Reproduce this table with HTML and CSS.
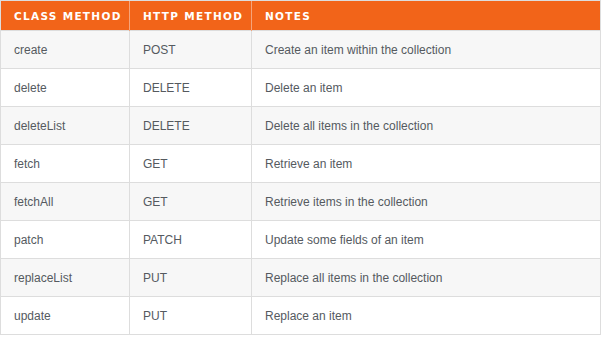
FILE: index.html
```html
<!DOCTYPE html>
<html lang="en">
<head>
    <meta charset="UTF-8">
    <title>Collection Methods</title>
    <link rel="stylesheet" href="styles.css">
</head>
<body>
    <table class="methods">
        <thead>
            <tr>
                <th class="col-class">Class Method</th>
                <th class="col-http">HTTP Method</th>
                <th>Notes</th>
            </tr>
        </thead>
        <tbody>
            <tr><td>create</td><td>POST</td><td>Create an item within the collection</td></tr>
            <tr><td>delete</td><td>DELETE</td><td>Delete an item</td></tr>
            <tr><td>deleteList</td><td>DELETE</td><td>Delete all items in the collection</td></tr>
            <tr><td>fetch</td><td>GET</td><td>Retrieve an item</td></tr>
            <tr><td>fetchAll</td><td>GET</td><td>Retrieve items in the collection</td></tr>
            <tr><td>patch</td><td>PATCH</td><td>Update some fields of an item</td></tr>
            <tr><td>replaceList</td><td>PUT</td><td>Replace all items in the collection</td></tr>
            <tr><td>update</td><td>PUT</td><td>Replace an item</td></tr>
        </tbody>
    </table>
</body>
</html>
```
FILE: styles.css
```css
* {
    margin: 0;
    padding: 0;
    box-sizing: border-box;
}

body {
    background-color: #ffffff;
    padding: 0;
    font-family: "Liberation Sans", Arial, sans-serif;
}

.methods {
    width: 601px;
    border-collapse: collapse;
    border: 1px solid #dddddd;
    table-layout: fixed;
}

.methods th {
    height: 30px;
    padding: 0 0 0 13px;
    background-color: #f26419;
    color: #ffffff;
    font-family: "DejaVu Sans", sans-serif;
    font-weight: 700;
    font-size: 10.5px;
    letter-spacing: 1.3px;
    text-transform: uppercase;
    text-align: left;
    border-left: 1px solid #f6a47a;
    border-top: 1px solid #dddddd;
}

.methods th:first-child {
    border-left: 1px solid #dddddd;
}

.col-class {
    width: 129px;
}

.col-http {
    width: 122px;
}

.methods td {
    height: 38px;
    padding: 0 0 0 13px;
    font-size: 12px;
    color: #555a5f;
    border: 1px solid #dddddd;
}

.methods tbody tr:nth-child(odd) td {
    background-color: #f7f7f7;
}
```
